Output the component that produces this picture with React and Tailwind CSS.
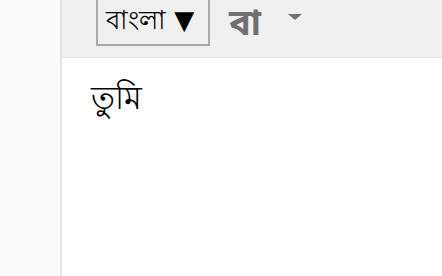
import React from 'react';

const App = () => {
  return (
    <div className="flex h-[276px] w-[442px] overflow-hidden bg-white" style={{ fontFamily: '"DejaVu Sans", sans-serif' }}>
      {/* Left rail */}
      <div className="w-[62px] shrink-0 border-r-2 border-[#e3e3e3] bg-[#fafafa]" />

      {/* Editor */}
      <div className="flex flex-1 flex-col">
        <div className="flex h-[58px] items-start border-b border-[#e3e3e3] bg-[#f0f0f0] pl-[34px]">
          <div className="-mt-[10px] flex h-[56px] w-[114px] items-end border-2 border-[#a8a8a8] pb-[6px] pl-[8px] text-[26px] leading-[36px] text-black">
            বাংলা ▼
          </div>
          <div className="ml-[19px] mt-[2px] text-[36px] font-bold leading-[48px] text-[#707070]" style={{ fontFamily: '"Noto Sans Bengali", sans-serif' }}>বা</div>
          <svg className="ml-[26px] mt-[13px]" width="16" height="8" viewBox="0 0 16 8">
            <path d="M1 1 L15 1 L8 7 Z" fill="#707070" />
          </svg>
        </div>
        <div className="px-[29px] pt-[18px] text-[32px] leading-[44px] text-black">তুমি</div>
      </div>
    </div>
  );
};

export default App;
